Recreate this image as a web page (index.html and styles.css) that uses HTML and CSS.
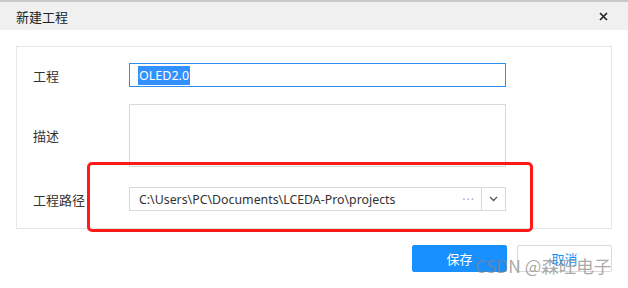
FILE: index.html
```html
<!DOCTYPE html>
<html lang="zh-CN">
<head>
    <meta charset="UTF-8">
    <title>新建工程</title>
    <link rel="stylesheet" href="styles.css">
</head>
<body>
    <div class="backdrop"></div>
    <div class="dialog">
        <div class="dialog-header">
            <span class="dialog-title">新建工程</span>
            <span class="dialog-close">
                <svg width="9" height="9" viewBox="0 0 9 9"><path d="M1 1L8 8M8 1L1 8" stroke="#222" stroke-width="1.6"/></svg>
            </span>
        </div>

        <div class="dialog-body">
            <div class="form-panel">
                <div class="form-row">
                    <div class="form-label">工程</div>
                    <div class="input input-active"><span class="selected">OLED2.0</span></div>
                </div>
                <div class="form-row row-desc">
                    <div class="form-label">描述</div>
                    <div class="textarea"></div>
                </div>
                <div class="form-row row-path">
                    <div class="form-label">工程路径</div>
                    <div class="input path-input">
                        <span class="path-text">C:\Users\PC\Documents\LCEDA-Pro\projects</span>
                        <span class="path-dots">···</span>
                        <span class="path-drop">
                            <svg width="9" height="6" viewBox="0 0 9 6"><path d="M1 1L4.5 4.5L8 1" fill="none" stroke="#555" stroke-width="1.3"/></svg>
                        </span>
                    </div>
                </div>
            </div>

            <div class="dialog-footer">
                <button class="btn btn-primary">保存</button>
                <button class="btn btn-default">取消</button>
            </div>
        </div>

        <div class="highlight-box"></div>
        <div class="watermark">CSDN @森旺电子</div>
    </div>
</body>
</html>
```

FILE: styles.css
```css
* {
    margin: 0;
    padding: 0;
    box-sizing: border-box;
}

body {
    font-family: "Noto Sans CJK SC", "Noto Sans", sans-serif;
    font-size: 13px;
    color: #333;
    background: #fff;
    width: 628px;
    height: 288px;
    overflow: hidden;
}

.backdrop {
    height: 2px;
    background: #c9c9c9;
}

.dialog {
    position: relative;
}

.dialog-header {
    height: 28px;
    background: #f0f0f0;
    display: flex;
    align-items: center;
    justify-content: space-between;
    padding: 0 20px 0 16px;
}

.dialog-title {
    font-size: 13px;
    color: #222;
}

.dialog-close {
    display: flex;
}

.dialog-body {
    padding: 16px 16px 0 16px;
}

.form-panel {
    width: 596px;
    border: 1px solid #e6e6e6;
    padding: 16px 16px 17px 16px;
}

.form-row {
    display: flex;
    align-items: center;
}

.row-desc {
    margin-top: 17px;
}

.row-path {
    margin-top: 20px;
}

.form-label {
    width: 96px;
    font-size: 13px;
    color: #333;
}

.input {
    width: 377px;
    height: 24px;
    border: 1px solid #d9d9d9;
    display: flex;
    align-items: center;
    padding-left: 8px;
    font-family: "Noto Sans", "Open Sans", sans-serif;
    font-size: 12.5px;
}

.input-active {
    border: 1.5px solid #2b8df0;
}

.selected {
    background: #3390ff;
    color: #fff;
    padding: 0 1px;
    line-height: 19px;
}

.textarea {
    width: 377px;
    height: 63px;
    border: 1px solid #d9d9d9;
}

.path-input {
    padding-left: 9px;
    padding-right: 0;
}

.path-text {
    flex: 1;
    color: #333;
    font-size: 12.35px;
}

.path-dots {
    color: #aaa;
    letter-spacing: 1px;
    margin-right: 6px;
    font-size: 12px;
}

.path-drop {
    width: 24px;
    height: 100%;
    border-left: 1px solid #d9d9d9;
    display: flex;
    align-items: center;
    justify-content: center;
}

.dialog-footer {
    display: flex;
    justify-content: flex-end;
    gap: 10px;
    width: 596px;
    margin-top: 16px;
}

.btn {
    height: 27px;
    width: 95px;
    font-family: "Noto Sans CJK SC", sans-serif;
    font-size: 13px;
    border-radius: 2px;
    cursor: pointer;
}

.btn-primary {
    background: #1890ff;
    border: 1px solid #1890ff;
    color: #fff;
}

.btn-default {
    background: #fff;
    border: 1px solid #d9d9d9;
    color: #1890ff;
}

.highlight-box {
    position: absolute;
    left: 87px;
    top: 160px;
    width: 446px;
    height: 70px;
    border: 3px solid #ff1a1a;
    border-radius: 5px;
}

.watermark {
    position: absolute;
    left: 475px;
    top: 251px;
    font-family: "Noto Sans CJK SC", sans-serif;
    font-size: 17.5px;
    color: rgba(130, 130, 130, 0.7);
    white-space: nowrap;
}
```
